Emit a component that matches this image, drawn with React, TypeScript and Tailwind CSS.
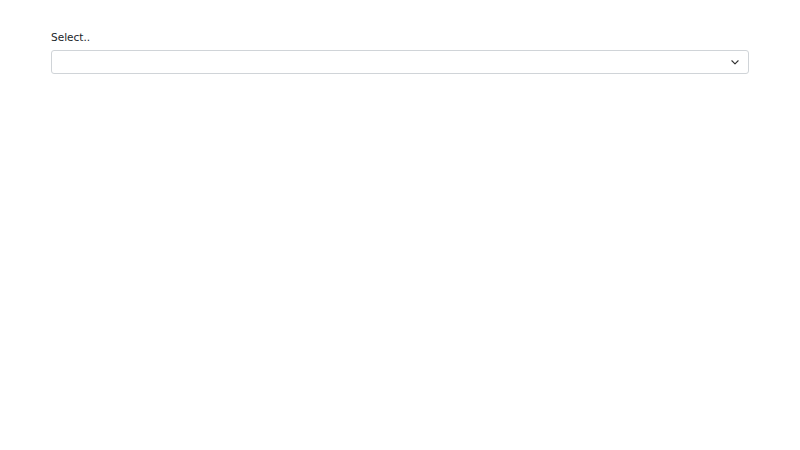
import React from 'react';

export default function App() {
  return (
    <div className="min-h-screen bg-white px-[51px] pt-[31px] font-['DejaVu_Sans',sans-serif] text-[#212529]">
      <label className="block text-[10.5px] leading-[12px] mb-[7px]">Select..</label>
      <button className="flex w-full h-[24px] items-center justify-end rounded-[3px] border border-[#d0d4d8] bg-white pr-[8px]">
        <svg width="10" height="10" viewBox="0 0 16 16" fill="none" stroke="#333" strokeWidth="1.8" strokeLinecap="round" strokeLinejoin="round">
          <path d="M3 6l5 5 5-5" />
        </svg>
      </button>
    </div>
  );
}
